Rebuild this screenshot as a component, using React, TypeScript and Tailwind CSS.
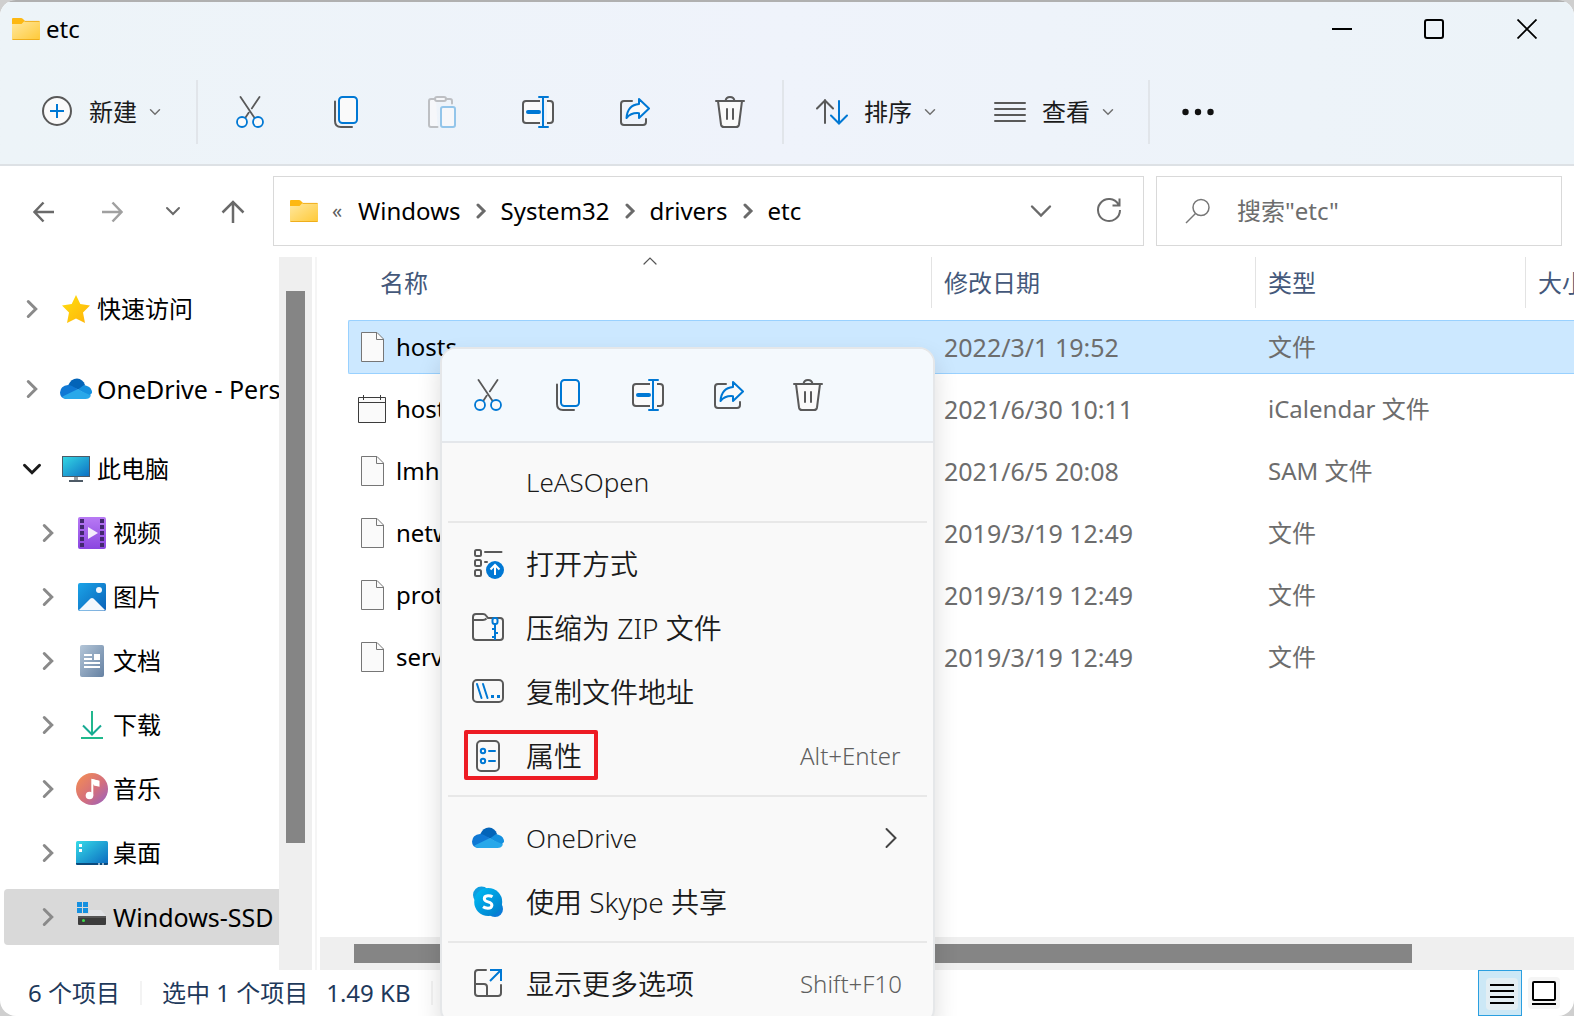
import { useState } from "react";
import type { ReactNode } from "react";

const INK = "#595959";
const BLUE = "#0078d4";

/* ---------- command icons ---------- */

const CutIcon = () => (
  <svg width="32" height="32" viewBox="0 0 32 32" fill="none" strokeWidth="1.8">
    <path d="M6.5 1 L20.6 22" stroke={INK} strokeLinecap="round" />
    <path d="M25.5 1 L17.8 12.4 M14.8 16.6 L11.2 22" stroke={INK} strokeLinecap="round" />
    <circle cx="8" cy="26" r="5" stroke={BLUE} fill="#fafafa" />
    <circle cx="24" cy="26" r="5" stroke={BLUE} fill="#fafafa" />
  </svg>
);

const CopyIcon = () => (
  <svg width="32" height="32" viewBox="0 0 32 32" fill="none" strokeWidth="2">
    <path d="M5 5.5 V25 Q5 31 11 31 H22" stroke={INK} strokeLinecap="round" />
    <rect x="9" y="1" width="18" height="26" rx="3.5" stroke={BLUE} fill="#fafafa" />
  </svg>
);

const PasteIcon = () => (
  <svg width="32" height="32" viewBox="0 0 32 32" fill="none" strokeWidth="2">
    <path d="M10 3 H5 Q3 3 3 5 V29 Q3 31 5 31 H11.5" stroke="#bdbfc3" fill="#f6f7fa" strokeLinecap="round" />
    <path d="M20 3 H24 Q26 3 26 5 V7.5" stroke="#bdbfc3" strokeLinecap="round" />
    <rect x="9" y="1" width="11" height="4" rx="2" stroke="#bdbfc3" fill="#f6f7fa" />
    <rect x="15" y="11" width="14" height="20" rx="2" stroke="#93c5ea" fill="#f6f7fa" />
  </svg>
);

const RenameIcon = () => (
  <svg width="32" height="32" viewBox="0 0 32 32" fill="none" strokeWidth="2">
    <path d="M18 5 H4 Q1 5 1 8 V24 Q1 27 4 27 H18" stroke={INK} fill="#fafafa" />
    <path d="M25 5 H28 Q31 5 31 8 V24 Q31 27 28 27 H25" stroke={INK} fill="#fafafa" />
    <path d="M6 16 H17" stroke={BLUE} strokeWidth="4" strokeLinecap="round" />
    <path d="M21 1 V31 M17 1 H26 M17 31 H26" stroke={BLUE} strokeLinecap="round" />
  </svg>
);

const ShareIcon = () => (
  <svg width="32" height="32" viewBox="0 0 32 32" fill="none" strokeWidth="2" strokeLinejoin="round">
    <path d="M14 5 H6 Q3 5 3 8 V26 Q3 29 6 29 H25 Q28 29 28 26 V23" stroke={INK} strokeLinecap="round" />
    <path d="M21 3 L31 12.5 L21 22 V17.2 Q13 16.5 8.5 22 Q9.500 9 21 8 Z" stroke={BLUE} fill="#fafafa" />
  </svg>
);

const TrashIcon = () => (
  <svg width="32" height="32" viewBox="0 0 32 32" fill="none" stroke={INK} strokeWidth="2" strokeLinecap="round">
    <path d="M11.5 5 Q12 1 16 1 Q20 1 20.5 5" />
    <path d="M4 5 L7 28.5 Q7.4 31 10 31 H22 Q24.6 31 25 28.5 L28 5" fill="#fafafa" />
    <path d="M2 5 H30" />
    <path d="M13 13 V23 M19 13 V23" />
  </svg>
);

const SortIcon = () => (
  <svg width="32" height="32" viewBox="0 0 32 32" fill="none" strokeWidth="2" strokeLinecap="round">
    <path d="M9 27 V4 M1 12.5 L9 4.5 L17 12.5" stroke={INK} />
    <path d="M23 5 V27 M15 19.5 L23 27.5 L31 19.5" stroke={BLUE} />
  </svg>
);

const ViewIcon = () => (
  <svg width="32" height="32" viewBox="0 0 32 32" stroke={INK} strokeWidth="2" strokeLinecap="round">
    <path d="M1 7 H31 M1 13 H31 M1 19 H31 M1 25 H31" />
  </svg>
);

const NewIcon = () => (
  <svg width="32" height="32" viewBox="0 0 32 32" fill="none" strokeWidth="2">
    <circle cx="16" cy="15" r="14" stroke={INK} fill="#fafafa" />
    <path d="M16 8 V22 M9 15 H23" stroke={BLUE} />
  </svg>
);

const Chevron = ({ dir, className }: { dir: "down" | "right" | "up"; className?: string }) => {
  const d = { down: "M2 5 L8 11 L14 5", right: "M5 2 L11 8 L5 14", up: "M2 11 L8 5 L14 11" }[dir];
  return (
    <svg viewBox="0 0 16 16" fill="none" stroke="currentColor" className={className} strokeLinecap="round">
      <path d={d} />
    </svg>
  );
};

/* ---------- coloured icons ---------- */

const FolderIcon = () => (
  <svg width="28" height="24" viewBox="0 0 28 24" className="shrink-0">
    <defs>
      <linearGradient id="folder" x1="0" y1="0" x2="1" y2="1">
        <stop offset="0" stopColor="#ffe8a0" />
        <stop offset="1" stopColor="#ffc937" />
      </linearGradient>
    </defs>
    <path d="M0 2 Q0 1 1 1 H9 Q10 1 11 2 L13 4 V10 H0 Z" fill="#fdb813" />
    <path d="M0 7 H9.5 L12.5 4 H27 Q28 4 28 5 V22 Q28 23 27 23 H1 Q0 23 0 22 Z" fill="url(#folder)" />
    <path d="M12.5 4.4 H27.5 M0.5 22.5 H27.5" stroke="#eda915" strokeWidth="0.9" />
  </svg>
);

const CloudIcon = () => (
  <svg width="32" height="32" viewBox="0 0 32 32" className="shrink-0">
    <path d="M8 12.5 Q11 5.5 17 5.5 Q23 6 25 12 L22 17 L12 15 Z" fill="#0364b8" />
    <path d="M6 26 Q0 25 0 19.5 Q0.5 12.5 8 12 Q10 12 12 13 L20 17.5 L9 26 Z" fill="#0f78d4" />
    <path d="M18 16.5 L22 13.5 Q24 11.5 27 13 Q32 14.5 32 20 L29 23 Z" fill="#1490df" />
    <path d="M2.5 23.5 L17.5 16.3 L31 22.5 Q29.5 26 25.5 26 H7 Q3.5 26 2.5 23.5 Z" fill="#28a8ea" />
  </svg>
);

const StarIcon = () => (
  <svg width="32" height="32" viewBox="0 0 32 32">
    <defs>
      <linearGradient id="star" x1="0" y1="0" x2="1" y2="1">
        <stop offset="0" stopColor="#ffdf0f" />
        <stop offset="1" stopColor="#ffb30a" />
      </linearGradient>
    </defs>
    <path
      d="M16 2 L20.3 11 L30 12.5 L23 19.5 L25 30 L16 25.5 L7 30 L9 19.5 L2 12.5 L11.7 11 Z"
      fill="url(#star)"
    />
  </svg>
);

const PcIcon = () => (
  <svg width="32" height="32" viewBox="0 0 32 32">
    <defs>
      <linearGradient id="pc" x1="0" y1="0" x2="1" y2="1">
        <stop offset="0" stopColor="#35d8e4" />
        <stop offset="1" stopColor="#0c6fc4" />
      </linearGradient>
    </defs>
    <rect x="2.5" y="3.5" width="27" height="20" fill="url(#pc)" stroke="#4c5a68" />
    <rect x="14" y="24" width="4" height="3" fill="#9aa0a6" />
    <rect x="9" y="27" width="14" height="2" fill="#4e5a66" />
  </svg>
);

const VideoIcon = () => (
  <svg width="32" height="32" viewBox="0 0 32 32">
    <defs>
      <linearGradient id="video" x1="0" y1="0" x2="0" y2="1">
        <stop offset="0" stopColor="#b87af4" />
        <stop offset="1" stopColor="#8a45e0" />
      </linearGradient>
    </defs>
    <rect x="2" y="0" width="28" height="32" rx="2" fill="url(#video)" />
    {[2, 8, 14, 20, 26].map((y) => (
      <g key={y} fill="#43286f">
        <rect x="4" y={y} width="4" height="4" />
        <rect x="24" y={y} width="4" height="4" />
      </g>
    ))}
    <path d="M12 10 L22 16 L12 22 Z" fill="#f4ecfc" />
  </svg>
);

const PictureIcon = () => (
  <svg width="32" height="32" viewBox="0 0 32 32">
    <defs>
      <linearGradient id="picture" x1="0" y1="0" x2="1" y2="1">
        <stop offset="0" stopColor="#1ba4e8" />
        <stop offset="1" stopColor="#0a62b8" />
      </linearGradient>
    </defs>
    <rect x="2" y="2" width="28" height="28" rx="2" fill="url(#picture)" />
    <path d="M3 29 L14.5 17.5 Q16 16.3 17.5 17.5 L29 29 Q28 29.5 27 29.5 H5 Q4 29.5 3 29 Z" fill="#f3f8fd" />
    <circle cx="23" cy="9" r="3" fill="#f3f8fd" />
  </svg>
);

const DocumentIcon = () => (
  <svg width="32" height="32" viewBox="0 0 32 32">
    <defs>
      <linearGradient id="doc" x1="0" y1="0" x2="1" y2="1">
        <stop offset="0" stopColor="#b4c6d8" />
        <stop offset="1" stopColor="#6581a2" />
      </linearGradient>
    </defs>
    <rect x="4" y="0" width="24" height="32" rx="2" fill="url(#doc)" />
    <path d="M8 10 H16 M8 14 H16 M8 18 H24 M8 22 H24" stroke="#fff" strokeWidth="2" />
    <rect x="18" y="9" width="6" height="6" fill="#fff" />
  </svg>
);

const DownloadIcon = () => (
  <svg width="32" height="32" viewBox="0 0 32 32" fill="none" strokeWidth="2">
    <path d="M16 2 V25" stroke="#22b78e" />
    <path d="M7 16.5 L16 25.5 L25 16.5" stroke="#15aa92" />
    <path d="M5 29 H27" stroke="#1fb98c" />
  </svg>
);

const MusicIcon = () => (
  <svg width="32" height="32" viewBox="0 0 32 32">
    <defs>
      <linearGradient id="music" x1="0" y1="0" x2="1" y2="1">
        <stop offset="0.1" stopColor="#f08a58" />
        <stop offset="0.55" stopColor="#d46f7c" />
        <stop offset="1" stopColor="#9560c4" />
      </linearGradient>
    </defs>
    <circle cx="16" cy="16" r="16" fill="url(#music)" />
    <circle cx="13.5" cy="22.5" r="3.8" fill="#fff" />
    <path d="M16.3 22.5 V7 L22.5 8.5 V12.5 L18 11.5" fill="none" stroke="#fff" strokeWidth="2" />
    <path d="M16 6 L23 8 V13 L17 11.5 Z" fill="#fff" />
  </svg>
);

const DesktopIcon = () => (
  <svg width="32" height="32" viewBox="0 0 32 32">
    <defs>
      <linearGradient id="desktop" x1="0" y1="0" x2="1" y2="1">
        <stop offset="0" stopColor="#36dbe8" />
        <stop offset="1" stopColor="#0a68bf" />
      </linearGradient>
    </defs>
    <rect x="0" y="4" width="32" height="24" rx="1.5" fill="url(#desktop)" />
    <path d="M0 26 H32 V26.5 Q32 28 30.5 28 H1.5 Q0 28 0 26.5 Z" fill="#0b4a7c" />
    <path d="M22 27 H24 M26 27 H28" stroke="#c5d9e8" strokeWidth="1.5" />
    <rect x="3" y="7" width="3" height="3" fill="#fff" />
    <rect x="3" y="12" width="3" height="3" fill="#fff" />
  </svg>
);

const DriveIcon = () => (
  <svg width="32" height="32" viewBox="0 0 32 32">
    <path d="M7 9 H25 L30 15 H2 Z" fill="#e1e3e6" />
    <rect x="2" y="15" width="28" height="9" rx="1" fill="#3c3c3c" />
    <rect x="2" y="15" width="28" height="2" fill="#565656" />
    <circle cx="7.5" cy="19.5" r="1.5" fill="#3fdc4a" />
    <rect x="0" y="0" width="13" height="13" fill="#d9d9d9" />
    <path d="M1 1 H6 V6 H1 Z M7 1 H12 V6 H7 Z M1 7 H6 V12 H1 Z M7 7 H12 V12 H7 Z" fill="#1590e0" />
  </svg>
);

const SkypeIcon = () => (
  <svg width="32" height="32" viewBox="0 0 32 32">
    <defs>
      <linearGradient id="skype" x1="0" y1="0" x2="1" y2="1">
        <stop offset="0.1" stopColor="#00b7f1" />
        <stop offset="1" stopColor="#0278c8" />
      </linearGradient>
    </defs>
    <circle cx="9.5" cy="9" r="8.5" fill="#0f9ee0" />
    <circle cx="23" cy="23" r="8" fill="#0a7bd8" />
    <circle cx="16.2" cy="16" r="14" fill="url(#skype)" />
    <path
      d="M20.5 10.8 Q18.5 9.5 15.8 9.7 Q12.2 10 12.3 12.8 Q12.4 15 16 15.9 Q20 16.9 19.9 19.3 Q19.6 22.2 15.8 22.2 Q13 22.2 11 20.8"
      fill="none"
      stroke="#fff"
      strokeWidth="3"
    />
  </svg>
);

/* ---------- context menu icons ---------- */

const OpenWithIcon = () => (
  <svg width="32" height="32" viewBox="0 0 32 32" fill="none" strokeWidth="2">
    <g stroke={INK}>
      <rect x="3" y="2" width="6" height="6" rx="1.5" />
      <rect x="3" y="12" width="6" height="6" rx="1.5" />
      <rect x="3" y="22" width="6" height="6" rx="1.5" />
      <path d="M13 4 H29.5 M13 14 H15" strokeLinecap="round" />
    </g>
    <circle cx="23" cy="22" r="9" fill={BLUE} />
    <path d="M23 27 V17.5 M18.5 21.5 L23 17 L27.5 21.5" stroke="#fff" />
  </svg>
);

const ZipIcon = () => (
  <svg width="32" height="32" viewBox="0 0 32 32" fill="none" strokeWidth="2">
    <path d="M1 10 V5 Q1 2 4 2 H11 Q13 2 14 3.5 L16 6 H28 Q31 6 31 9 V25 Q31 28 28 28 H4 Q1 28 1 25 V9" stroke={INK} />
    <path d="M1 8 H11 Q13 8 14.5 6.5" stroke={INK} />
    <rect x="20.5" y="6" width="5" height="6" rx="2" stroke={BLUE} />
    <path d="M23 12 V28 M20 17 H23 M23 21 H26 M20 25 H23" stroke={BLUE} />
  </svg>
);

const PathIcon = () => (
  <svg width="32" height="32" viewBox="0 0 32 32" fill="none" strokeWidth="2">
    <rect x="1" y="4" width="30" height="22" rx="4" stroke={INK} />
    <path d="M5 8 L9.5 22 M11 8 L15.5 22" stroke={BLUE} strokeLinecap="round" />
    <path d="M19 20.5 H22 M25 20.5 H28" stroke={BLUE} strokeWidth="3" />
  </svg>
);

const PropertiesIcon = () => (
  <svg width="32" height="32" viewBox="0 0 32 32" fill="none" strokeWidth="2">
    <rect x="5" y="1" width="22" height="30" rx="4" stroke={INK} />
    <circle cx="11" cy="11" r="2.2" stroke={BLUE} />
    <circle cx="11" cy="21" r="2.2" stroke={BLUE} />
    <path d="M17 11 H23 M17 21 H23" stroke={BLUE} strokeLinecap="round" />
  </svg>
);

const MoreOptionsIcon = () => (
  <svg width="32" height="32" viewBox="0 0 32 32" fill="none" strokeWidth="2">
    <path d="M14 2 H6 Q3 2 3 5 V25 Q3 28 6 28 H26 Q29 28 29 25 V17" stroke={INK} strokeLinecap="round" />
    <path d="M3 16 H12 Q15 16 15 19 V28" stroke={INK} />
    <path d="M18 2 H29 V13 M29 2 L18 13" stroke={BLUE} />
  </svg>
);

/* ---------- file icons ---------- */

const FileIcon = () => (
  <svg width="28" height="32" viewBox="0 0 28 32" fill="#fafafa" stroke="#767676" className="shrink-0">
    <path d="M3.5 1.5 H19 L25.5 8 V30.5 H3.5 Z" />
    <path d="M18.5 1.5 V8.5 H25.5" fill="none" />
  </svg>
);

const CalendarIcon = () => (
  <svg width="28" height="32" viewBox="0 0 28 32" fill="#fafafa" stroke="#3c3c3c" className="shrink-0">
    <path d="M0.5 4.5 H27.5 V29.5 H0.5 Z M0.5 9.5 H27.5" />
    <path d="M5.5 2 V7 M22.5 2 V7" />
  </svg>
);

/* ---------- data ---------- */

const commands = [
  { label: "剪切", icon: <CutIcon /> },
  { label: "复制", icon: <CopyIcon /> },
  { label: "粘贴", icon: <PasteIcon />, disabled: true },
  { label: "重命名", icon: <RenameIcon /> },
  { label: "共享", icon: <ShareIcon /> },
  { label: "删除", icon: <TrashIcon /> },
];

const places = [
  { label: "快速访问", icon: <StarIcon />, style: "mb-6 text-2xl" },
  { label: "OneDrive - Pers", icon: <CloudIcon />, style: "mb-6 text-[25px]" },
  { label: "此电脑", icon: <PcIcon />, style: "mb-2 text-2xl", open: true },
];

const folders = [
  { label: "视频", icon: <VideoIcon /> },
  { label: "图片", icon: <PictureIcon /> },
  { label: "文档", icon: <DocumentIcon /> },
  { label: "下载", icon: <DownloadIcon /> },
  { label: "音乐", icon: <MusicIcon /> },
  { label: "桌面", icon: <DesktopIcon /> },
  { label: "Windows-SSD", icon: <DriveIcon />, current: true },
];

const files = [
  { name: "hosts", date: "2022/3/1 19:52", type: "文件" },
  { name: "hosts.ics", date: "2021/6/30 10:11", type: "iCalendar 文件", calendar: true },
  { name: "lmhosts.sam", date: "2021/6/5 20:08", type: "SAM 文件" },
  { name: "networks", date: "2019/3/19 12:49", type: "文件" },
  { name: "protocol", date: "2019/3/19 12:49", type: "文件" },
  { name: "services", date: "2019/3/19 12:49", type: "文件" },
];

const crumbs = ["Windows", "System32", "drivers", "etc"];

/* ---------- parts ---------- */

const Divider = () => <div className="h-16 w-0.5 shrink-0 bg-[#e1e5ea]" />;

function TitleBar() {
  return (
    <div className="flex h-[54px] items-center justify-between pl-3">
      <div className="flex items-center gap-1.5">
        <FolderIcon />
        <h1 className="text-2xl leading-8 text-black">etc</h1>
      </div>
      <div className="flex text-black">
        <button aria-label="最小化" className="flex h-full w-[92px] items-center justify-center">
          <svg width="20" height="20" viewBox="0 0 20 20" stroke="currentColor" strokeWidth="2">
            <path d="M0 10 H20" />
          </svg>
        </button>
        <button aria-label="最大化" className="flex h-full w-[92px] items-center justify-center">
          <svg width="20" height="20" viewBox="0 0 20 20" fill="none" stroke="currentColor" strokeWidth="2">
            <rect x="1" y="1" width="18" height="18" rx="2" />
          </svg>
        </button>
        <button aria-label="关闭" className="flex h-full w-[94px] items-center justify-center">
          <svg width="20" height="20" viewBox="0 0 20 20" stroke="currentColor" strokeWidth="1.8">
            <path d="M0.5 0.5 L19.5 19.5 M19.5 0.5 L0.5 19.5" />
          </svg>
        </button>
      </div>
    </div>
  );
}

function MenuButton({ icon, label }: { icon: ReactNode; label: string }) {
  return (
    <button className="flex h-16 shrink-0 items-center text-2xl leading-8 text-[#1b1b1b]">
      {icon}
      <span className="mr-3 ml-4">{label}</span>
      <Chevron dir="down" className="size-3 stroke-2 text-[#707070]" />
    </button>
  );
}

function Toolbar() {
  return (
    <div className="flex h-[108px] items-center pt-1" role="toolbar">
      <div className="flex w-[196px] pl-[41px]">
        <MenuButton icon={<NewIcon />} label="新建" />
      </div>
      <Divider />
      <div className="mx-1 flex">
        {commands.map((c) => (
          <button
            key={c.label}
            aria-label={c.label}
            disabled={c.disabled}
            className="flex h-16 w-24 items-center justify-center"
          >
            {c.icon}
          </button>
        ))}
      </div>
      <Divider />
      <div className="mr-[34px] ml-8 flex gap-[58px]">
        <MenuButton icon={<SortIcon />} label="排序" />
        <MenuButton icon={<ViewIcon />} label="查看" />
      </div>
      <Divider />
      <button aria-label="更多" className="ml-4 flex h-16 w-16 items-center justify-center">
        <svg width="32" height="8" viewBox="0 0 32 8" fill="#111">
          <circle cx="3.5" cy="4" r="3.2" />
          <circle cx="16" cy="4" r="3.2" />
          <circle cx="28.5" cy="4" r="3.2" />
        </svg>
      </button>
    </div>
  );
}

function AddressRow() {
  const [query, setQuery] = useState("");

  return (
    <div className="flex h-[91px] shrink-0 items-start pt-2.5 pr-3">
      <div className="flex h-[70px] w-[273px] shrink-0 items-center pl-8 text-[#6a6a6a]">
        <button aria-label="后退" className="mr-11">
          <svg width="24" height="24" viewBox="0 0 24 24" fill="none" stroke="currentColor" strokeWidth="2.5">
            <path d="M22 13 H2.5 M11.5 3.5 L2.5 13 L11.5 22.5" />
          </svg>
        </button>
        <button aria-label="前进" className="mr-[41px] text-[#a0a0a0]">
          <svg width="24" height="24" viewBox="0 0 24 24" fill="none" stroke="currentColor" strokeWidth="2.5">
            <path d="M2 13 H21.5 M12.5 3.5 L21.5 13 L12.5 22.5" />
          </svg>
        </button>
        <button aria-label="最近" className="mr-10">
          <Chevron dir="down" className="size-4 stroke-2" />
        </button>
        <button aria-label="上移">
          <svg width="24" height="24" viewBox="0 0 24 24" fill="none" stroke="currentColor" strokeWidth="2.5">
            <path d="M12 24 V3 M1.5 13.5 L12 3 L22.5 13.5" />
          </svg>
        </button>
      </div>

      <nav
        aria-label="地址"
        className="mr-3 flex h-[70px] min-w-0 flex-1 items-center border border-[#d9d9d9] pr-5 pl-4 text-2xl leading-8 text-black"
      >
        <FolderIcon />
        <span className="w-10 pl-3.5 text-xl leading-8 text-[#5f5f5f]">«</span>
        {crumbs.map((c, i) => (
          <span key={c} className="flex items-center">
            {i > 0 && <Chevron dir="right" className="mx-3 size-4 stroke-3 text-[#6a6a6a]" />}
            <button>{c}</button>
          </span>
        ))}
        <button aria-label="历史记录" className="ml-auto text-[#6a6a6a]">
          <Chevron dir="down" className="size-6 stroke-[1.6]" />
        </button>
        <button aria-label="刷新" className="ml-[42px] text-[#6a6a6a]">
          <svg width="28" height="28" viewBox="0 0 28 28" fill="none" stroke="currentColor" strokeWidth="2">
            <path d="M23.5 7.5 A11 11 0 1 0 25 13 M24.5 1.5 V8.5 H17.5" />
          </svg>
        </button>
      </nav>

      <div className="flex h-[70px] w-[26%] shrink-0 items-center border border-[#d9d9d9] pr-4 pl-7 text-[#767676]">
        <svg width="26" height="26" viewBox="0 0 26 26" fill="none" stroke="currentColor" strokeWidth="1.5">
          <circle cx="16" cy="9.5" r="8" />
          <path d="M10.5 15.5 L1 25" />
        </svg>
        <input
          aria-label="搜索"
          value={query}
          onChange={(e) => setQuery(e.target.value)}
          placeholder={'搜索"etc"'}
          className="ml-[26px] min-w-0 flex-1 bg-transparent text-2xl leading-8 text-black outline-none placeholder:text-[#6d6d6d]"
        />
      </div>
    </div>
  );
}

function Sidebar() {
  return (
    <aside className="flex w-[312px] shrink-0 leading-8 text-black">
      <nav aria-label="导航窗格" className="min-w-0 flex-1 overflow-hidden pt-6 pl-1">
        {places.map((p) => (
          <button key={p.label} className={`flex h-14 w-full items-center pl-[18px] ${p.style}`}>
            <Chevron
              dir={p.open ? "down" : "right"}
              className={`mr-[18px] size-5 shrink-0 stroke-[2.4] ${p.open ? "text-[#1b1b1b]" : "text-[#8a8a8a]"}`}
            />
            <span className="mr-[5px] shrink-0">{p.icon}</span>
            <span className="whitespace-nowrap">{p.label}</span>
          </button>
        ))}
        {folders.map((f) => (
          <button
            key={f.label}
            className={`mb-2 flex h-14 w-full items-center pl-[34px] ${
              f.current ? "rounded-l-sm bg-[#d9d9d9] text-[25px]" : "text-2xl"
            }`}
          >
            <Chevron dir="right" className="mr-[18px] size-5 shrink-0 stroke-[2.4] text-[#8a8a8a]" />
            <span className="mr-[5px] shrink-0">{f.icon}</span>
            <span className="whitespace-nowrap">{f.label}</span>
          </button>
        ))}
      </nav>
      <div className="w-[33px] shrink-0 bg-[#efefef] px-[7px] pt-[34px]">
        <div className="h-[552px] bg-[#858585]" />
      </div>
    </aside>
  );
}

const columns = "grid grid-cols-[584px_324px_270px_minmax(160px,1fr)]";

function FileList() {
  return (
    <main className="flex min-w-0 flex-1 flex-col overflow-hidden">
      <div className="flex-1 overflow-hidden pl-[31px]">
        <table className="block w-full text-left text-2xl leading-8">
          <thead className="block text-[#44587a]">
            <tr className={columns}>
              <th className="relative h-[51px] border-r border-[#e3e3e3] pt-2.5 pl-8 font-normal">
                名称
                <Chevron dir="up" className="absolute -top-1 left-[294px] size-4 stroke-[1.2] text-[#555]" />
              </th>
              <th className="border-r border-[#e3e3e3] pt-2.5 pl-3 font-normal">修改日期</th>
              <th className="border-r border-[#e3e3e3] pt-2.5 pl-3 font-normal">类型</th>
              <th className="pt-2.5 pl-3 font-normal">大小</th>
            </tr>
          </thead>
          <tbody className="mt-3 flex flex-col gap-2">
            {files.map((f, i) => (
              <tr
                key={f.name}
                className={`${columns} h-[54px] items-center border border-r-0 ${
                  i === 0 ? "rounded-l-xs border-[#99d1ff] bg-[#cce8ff]" : "border-transparent"
                }`}
              >
                <td className="flex items-center gap-2.5 pl-[9px] text-black">
                  {f.calendar ? <CalendarIcon /> : <FileIcon />}
                  {f.name}
                </td>
                <td className="pl-[11px] text-[25px] text-[#6d6d6d]">{f.date}</td>
                <td className="pl-[11px] text-[#6d6d6d]">{f.type}</td>
                <td />
              </tr>
            ))}
          </tbody>
        </table>
      </div>
      <div className="ml-[3px] h-[33px] shrink-0 bg-[#efefef] py-[7px] pr-[162px] pl-[34px]">
        <div className="h-full bg-[#858585]" />
      </div>
    </main>
  );
}

function StatusBar() {
  return (
    <footer className="flex h-[46px] shrink-0 items-center pl-7 text-2xl leading-8 text-[#1e395b]">
      <span>6 个项目</span>
      <span className="mr-5 ml-5 h-6 w-0.5 bg-[#f3f3f3]" />
      <span>选中 1 个项目</span>
      <span className="ml-[18px]">1.49 KB</span>
      <span className="ml-5 h-6 w-0.5 bg-[#f3f3f3]" />
      <div className="mr-3.5 ml-auto flex h-full items-center gap-1.5 text-black">
        <button
          aria-label="详细信息"
          aria-pressed="true"
          className="flex h-full w-11 items-center justify-center border border-[#2a9fe0] bg-[#cce8f6] pt-0.5 pl-1"
        >
          <svg width="32" height="32" viewBox="0 0 32 32">
            <rect width="32" height="32" rx="4" fill="#e3eef3" />
            <path d="M4 7 H28 M4 13 H28 M4 19 H28 M4 25 H28" stroke="currentColor" strokeWidth="2" />
          </svg>
        </button>
        <button aria-label="大图标">
          <svg width="32" height="32" viewBox="0 0 32 32">
            <rect width="32" height="32" rx="4" fill="#f5f5f5" />
            <rect x="5" y="5" width="22" height="18" rx="1" fill="#fff" stroke="currentColor" strokeWidth="2" />
            <path d="M4 27 H28" stroke="currentColor" strokeWidth="2" />
          </svg>
        </button>
      </div>
    </footer>
  );
}

interface MenuItemProps {
  icon?: ReactNode;
  label: string;
  latin?: boolean;
  shortcut?: string;
  submenu?: boolean;
  marked?: boolean;
}

function MenuItem({ icon, label, latin, shortcut, submenu, marked }: MenuItemProps) {
  return (
    <button role="menuitem" className="relative flex h-16 w-full items-center px-6 font-[350] text-[#1b1b1b]">
      <span className="mr-[22px] size-8 shrink-0">{icon}</span>
      <span className={latin ? "text-[26px] leading-8" : "text-[28px] leading-8"}>{label}</span>
      {shortcut && (
        <span className="ml-auto w-[103px] text-left text-2xl leading-8 whitespace-nowrap text-[#5f5f5f]">
          {shortcut}
        </span>
      )}
      {submenu && <Chevron dir="right" className="ml-auto size-6 stroke-[1.3] text-[#444]" />}
      {marked && (
        <span className="absolute top-1.5 left-4 h-[50px] w-[134px] rounded-xs border-4 border-[#ed1c24]" />
      )}
    </button>
  );
}

function ContextMenu() {
  return (
    <div
      role="menu"
      className="absolute top-[347px] left-[440px] w-[495px] overflow-hidden rounded-2xl border-2 border-[#e5e7e9] bg-[#f9f9f9] shadow-[0_12px_24px_rgba(0,0,0,0.14)]"
    >
      <div className="flex h-[94px] items-center border-b-2 border-[#e4e7eb] bg-[#f4f9fd] pl-1.5">
        {commands
          .filter((c) => !c.disabled)
          .map((c) => (
            <button key={c.label} aria-label={c.label} className="flex size-20 items-center justify-center">
              {c.icon}
            </button>
          ))}
      </div>
      <div className="divide-y-2 divide-[#e8e8e8] px-1.5">
        <div className="pt-[7px] pb-[7px]">
          <MenuItem label="LeASOpen" latin />
        </div>
        <div className="pt-[9px] pb-[7px]">
          <MenuItem icon={<OpenWithIcon />} label="打开方式" />
          <MenuItem icon={<ZipIcon />} label="压缩为 ZIP 文件" />
          <MenuItem icon={<PathIcon />} label="复制文件地址" />
          <MenuItem icon={<PropertiesIcon />} label="属性" shortcut="Alt+Enter" marked />
        </div>
        <div className="pt-[9px] pb-[7px]">
          <MenuItem icon={<CloudIcon />} label="OneDrive" latin submenu />
          <MenuItem icon={<SkypeIcon />} label="使用 Skype 共享" />
        </div>
        <div className="pt-[9px] pb-[7px]">
          <MenuItem icon={<MoreOptionsIcon />} label="显示更多选项" shortcut="Shift+F10" />
        </div>
      </div>
    </div>
  );
}

export default function App() {
  return (
    <div className="h-screen overflow-hidden bg-[#cfcfcf] font-['Noto_Sans','Noto_Sans_CJK_SC',sans-serif]">
      <div className="relative flex h-full flex-col overflow-hidden rounded-2xl bg-white">
        <header className="shrink-0 border-t-2 border-b-2 border-t-[#b0b0b0] border-b-[#dde1e5] bg-linear-to-r from-[#edf4f8] via-[#eff3fb] to-[#ecf3f8]">
          <TitleBar />
          <Toolbar />
        </header>
        <AddressRow />
        <div className="flex min-h-0 flex-1">
          <Sidebar />
          <div className="ml-[3px] w-0.5 shrink-0 bg-[#f5f5f5]" />
          <FileList />
        </div>
        <StatusBar />
        <ContextMenu />
      </div>
    </div>
  );
}
